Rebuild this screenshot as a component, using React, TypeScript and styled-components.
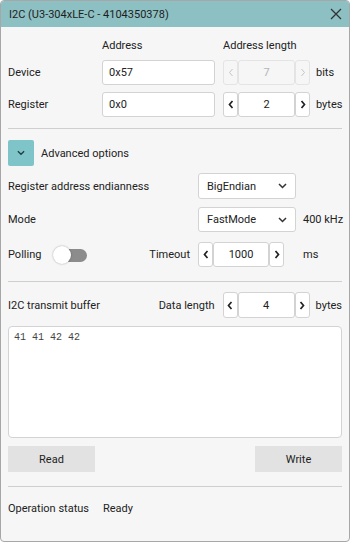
import React from "react";
import styled, { createGlobalStyle } from "styled-components";

const GlobalStyle = createGlobalStyle`
  html, body {
    margin: 0;
    padding: 0;
    background: #ffffff;
  }
  body {
    font-family: Roboto, "Liberation Sans", Arial, sans-serif;
    font-size: 11px;
    color: #222;
  }
`;

const Window = styled.div`
  width: 350px;
  height: 542px;
  box-sizing: border-box;
  border: 1px solid #a7a7a7;
  border-radius: 4px;
  overflow: hidden;
  background: #f6f6f6;
  display: flex;
  flex-direction: column;
`;

const TitleBar = styled.div`
  height: 26px;
  background: #8dc0c3;
  display: flex;
  align-items: center;
  justify-content: space-between;
  padding: 0 7px 0 8px;
  flex-shrink: 0;
  .title {
    font-size: 11px;
    color: #1e1e1e;
  }
`;

const Body = styled.div`
  padding: 0 7px;
  display: flex;
  flex-direction: column;
`;

const AddressGrid = styled.div`
  display: grid;
  grid-template-columns: 86px 113px 87px 1fr;
  grid-template-rows: 16px 25px 25px;
  column-gap: 8px;
  row-gap: 7px;
  align-items: center;
  padding-top: 10px;
`;

const Cell = styled.div<{ $indent?: number }>`
  white-space: nowrap;
  margin-left: ${(p) => p.$indent || 0}px;
`;

const TextInput = styled.div`
  height: 100%;
  box-sizing: border-box;
  background: #fff;
  border: 1px solid #d3d3d3;
  border-radius: 3px;
  display: flex;
  align-items: center;
  padding-left: 6px;
`;

const Divider = styled.div<{ $top: number; $bottom: number }>`
  height: 1px;
  background: #cfcfcf;
  margin-top: ${(p) => p.$top}px;
  margin-bottom: ${(p) => p.$bottom}px;
`;

const SpinWrap = styled.div<{ $w: number; $h: number; $disabled?: boolean }>`
  width: ${(p) => p.$w}px;
  height: ${(p) => p.$h}px;
  display: flex;
  color: ${(p) => (p.$disabled ? "#b4b4b4" : "#222")};
`;

const SpinBtn = styled.div<{ $disabled?: boolean }>`
  width: 15px;
  flex-shrink: 0;
  box-sizing: border-box;
  background: ${(p) => (p.$disabled ? "#f6f6f6" : "#fff")};
  border: 1px solid ${(p) => (p.$disabled ? "#e4e4e4" : "#d3d3d3")};
  border-radius: 3px;
  display: flex;
  align-items: center;
  justify-content: center;
`;

const SpinValue = styled.div<{ $disabled?: boolean }>`
  flex: 1;
  box-sizing: border-box;
  background: ${(p) => (p.$disabled ? "#f6f6f6" : "#fff")};
  border: 1px solid ${(p) => (p.$disabled ? "#e4e4e4" : "#d3d3d3")};
  border-radius: 3px;
  display: flex;
  align-items: center;
  justify-content: center;
`;

const Chevron = ({ dir, disabled }: { dir: "left" | "right"; disabled?: boolean }) => (
  <svg width="6" height="9" viewBox="0 0 6 9">
    <polyline
      points={dir === "left" ? "4.5,1 1.5,4.5 4.5,8" : "1.5,1 4.5,4.5 1.5,8"}
      fill="none"
      stroke={disabled ? "#c4c4c4" : "#222"}
      strokeWidth={disabled ? 1 : 1.7}
    />
  </svg>
);

const DownChevron = ({ color = "#333", w = 9 }: { color?: string; w?: number }) => (
  <svg width={w} height="6" viewBox="0 0 9 6">
    <polyline points="1,1 4.5,4.5 8,1" fill="none" stroke={color} strokeWidth="1.5" />
  </svg>
);

const Spinner = ({
  value,
  w = 87,
  h = 25,
  disabled,
}: {
  value: string;
  w?: number;
  h?: number;
  disabled?: boolean;
}) => (
  <SpinWrap $w={w} $h={h} $disabled={disabled}>
    <SpinBtn $disabled={disabled}>
      <Chevron dir="left" disabled={disabled} />
    </SpinBtn>
    <SpinValue $disabled={disabled}>{value}</SpinValue>
    <SpinBtn $disabled={disabled}>
      <Chevron dir="right" disabled={disabled} />
    </SpinBtn>
  </SpinWrap>
);

const AdvancedRow = styled.div`
  display: flex;
  align-items: center;
  gap: 7px;
  height: 26px;
`;

const ToggleButton = styled.div`
  width: 26px;
  height: 26px;
  border-radius: 2px;
  background: #7ec4c9;
  display: flex;
  align-items: center;
  justify-content: center;
`;

const OptionsGrid = styled.div`
  display: grid;
  grid-template-columns: 190px 98px 1fr;
  grid-template-rows: 26px 25px 27px;
  row-gap: 8px;
  align-items: center;
  margin-top: 7px;
  .unit {
    padding-left: 7px;
    white-space: nowrap;
  }
  .last {
    margin-top: 2px;
  }
`;

const Select = styled.div`
  height: 100%;
  box-sizing: border-box;
  background: #fff;
  border: 1px solid #d3d3d3;
  border-radius: 3px;
  display: flex;
  align-items: center;
  justify-content: space-between;
  padding: 0 8px 0 8px;
`;

const PollingCell = styled.div`
  display: flex;
  align-items: center;
  padding-right: 8px;
  .timeout {
    margin-left: auto;
  }
`;

const Switch = styled.div`
  position: relative;
  width: 34px;
  height: 20px;
  margin-left: 12px;
  .track {
    position: absolute;
    left: 4px;
    right: 0;
    top: 4px;
    height: 13px;
    border-radius: 7px;
    background: #8c8c8c;
  }
  .knob {
    position: absolute;
    left: 0;
    top: 1px;
    width: 18px;
    height: 18px;
    border-radius: 50%;
    background: #fff;
    box-shadow: 0 0 2px rgba(0, 0, 0, 0.35);
  }
`;

const BufferRow = styled.div`
  display: flex;
  align-items: center;
  height: 26px;
  .label {
    flex: 1;
  }
  .dl {
    margin-right: 8px;
  }
  .unit {
    margin-left: 6px;
  }
`;

const BufferBox = styled.div`
  margin-top: 8px;
  height: 112px;
  box-sizing: border-box;
  background: #fff;
  border: 1px solid #d3d3d3;
  border-radius: 4px;
  padding: 5px 5px;
  font-family: "Liberation Mono", "DejaVu Sans Mono", monospace;
  font-size: 10px;
  color: #444;
  line-height: 12px;
`;

const ButtonRow = styled.div`
  margin-top: 8px;
  display: flex;
  justify-content: space-between;
`;

const ActionButton = styled.div`
  width: 87px;
  height: 26px;
  background: #e2e2e2;
  display: flex;
  align-items: center;
  justify-content: center;
`;

const StatusRow = styled.div`
  display: grid;
  grid-template-columns: 95px 1fr;
  height: 16px;
  align-items: center;
`;

export default function App() {
  return (
    <>
      <GlobalStyle />
      <Window>
        <TitleBar>
          <span className="title">I2C (U3-304xLE-C - 4104350378)</span>
          <svg width="12" height="12" viewBox="0 0 12 12">
            <path d="M1 1 L11 11 M11 1 L1 11" stroke="#333" strokeWidth="1.3" />
          </svg>
        </TitleBar>
        <Body>
          <AddressGrid>
            <div />
            <Cell>Address</Cell>
            <Cell>Address length</Cell>
            <div />

            <Cell>Device</Cell>
            <TextInput>0x57</TextInput>
            <Spinner value="7" disabled />
            <Cell $indent={-2}>bits</Cell>

            <Cell>Register</Cell>
            <TextInput>0x0</TextInput>
            <Spinner value="2" />
            <Cell $indent={-2}>bytes</Cell>
          </AddressGrid>

          <Divider $top={11} $bottom={11} />

          <AdvancedRow>
            <ToggleButton>
              <DownChevron color="#1f3f42" w={8} />
            </ToggleButton>
            <span>Advanced options</span>
          </AdvancedRow>

          <OptionsGrid>
            <Cell>Register address endianness</Cell>
            <Select>
              <span>BigEndian</span>
              <DownChevron />
            </Select>
            <div />

            <Cell>Mode</Cell>
            <Select>
              <span>FastMode</span>
              <DownChevron />
            </Select>
            <div className="unit">400 kHz</div>

            <PollingCell className="last">
              <span>Polling</span>
              <Switch>
                <div className="track" />
                <div className="knob" />
              </Switch>
              <span className="timeout">Timeout</span>
            </PollingCell>
            <div className="last">
              <Spinner value="1000" w={86} />
            </div>
            <div className="unit last">ms</div>
          </OptionsGrid>

          <Divider $top={14} $bottom={10} />

          <BufferRow>
            <span className="label">I2C transmit buffer</span>
            <span className="dl">Data length</span>
            <Spinner value="4" h={26} />
            <span className="unit">bytes</span>
          </BufferRow>

          <BufferBox>41 41 42 42</BufferBox>

          <ButtonRow>
            <ActionButton>Read</ActionButton>
            <ActionButton>Write</ActionButton>
          </ButtonRow>

          <Divider $top={14} $bottom={13} />

          <StatusRow>
            <span>Operation status</span>
            <span>Ready</span>
          </StatusRow>
        </Body>
      </Window>
    </>
  );
}
